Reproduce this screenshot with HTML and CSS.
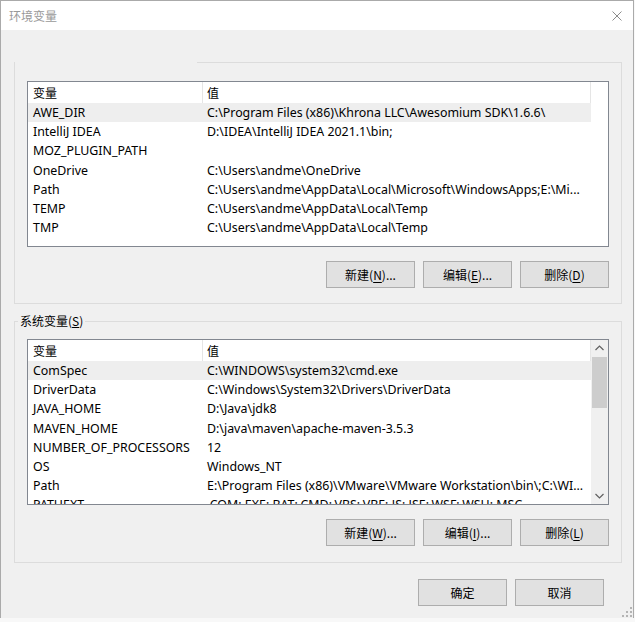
FILE: index.html
```html
<!DOCTYPE html>
<html lang="zh-CN">

<head>
    <meta charset="UTF-8">
    <title>环境变量</title>
    <link rel="stylesheet" href="styles.css">
</head>

<body>
    <div class="window">
        <div class="titlebar">
            <span class="title">环境变量</span>
            <svg class="close" width="10" height="10" viewBox="0 0 10 10">
                <path d="M0.5 0.5 L9.5 9.5 M9.5 0.5 L0.5 9.5" stroke="#8c8c8c" stroke-width="1" fill="none" />
            </svg>
        </div>

        <div class="content">
            <!-- user variables -->
            <div class="group group-user">
                <span class="group-title blank"></span>
                <div class="listbox">
                    <div class="list-body">
                        <div class="list-head">
                            <span class="col-name">变量</span>
                            <span class="col-value">值</span>
                        </div>
                        <div class="list-row selected">
                            <span class="col-name">AWE_DIR</span>
                            <span class="col-value">C:\Program Files (x86)\Khrona LLC\Awesomium SDK\1.6.6\</span>
                        </div>
                        <div class="list-row">
                            <span class="col-name">IntelliJ IDEA</span>
                            <span class="col-value">D:\IDEA\IntelliJ IDEA 2021.1\bin;</span>
                        </div>
                        <div class="list-row">
                            <span class="col-name">MOZ_PLUGIN_PATH</span>
                            <span class="col-value"></span>
                        </div>
                        <div class="list-row">
                            <span class="col-name">OneDrive</span>
                            <span class="col-value">C:\Users\andme\OneDrive</span>
                        </div>
                        <div class="list-row">
                            <span class="col-name">Path</span>
                            <span class="col-value">C:\Users\andme\AppData\Local\Microsoft\WindowsApps;E:\Mi...</span>
                        </div>
                        <div class="list-row">
                            <span class="col-name">TEMP</span>
                            <span class="col-value">C:\Users\andme\AppData\Local\Temp</span>
                        </div>
                        <div class="list-row">
                            <span class="col-name">TMP</span>
                            <span class="col-value">C:\Users\andme\AppData\Local\Temp</span>
                        </div>
                    </div>
                </div>
                <div class="button-row">
                    <button class="btn">新建(<u>N</u>)...</button>
                    <button class="btn">编辑(<u>E</u>)...</button>
                    <button class="btn">删除(<u>D</u>)</button>
                </div>
            </div>

            <!-- system variables -->
            <div class="group group-system">
                <span class="group-title">系统变量(<u>S</u>)</span>
                <div class="listbox">
                    <div class="list-body">
                        <div class="list-head">
                            <span class="col-name">变量</span>
                            <span class="col-value">值</span>
                        </div>
                        <div class="list-row selected">
                            <span class="col-name">ComSpec</span>
                            <span class="col-value">C:\WINDOWS\system32\cmd.exe</span>
                        </div>
                        <div class="list-row">
                            <span class="col-name">DriverData</span>
                            <span class="col-value">C:\Windows\System32\Drivers\DriverData</span>
                        </div>
                        <div class="list-row">
                            <span class="col-name">JAVA_HOME</span>
                            <span class="col-value">D:\Java\jdk8</span>
                        </div>
                        <div class="list-row">
                            <span class="col-name">MAVEN_HOME</span>
                            <span class="col-value">D:\java\maven\apache-maven-3.5.3</span>
                        </div>
                        <div class="list-row">
                            <span class="col-name">NUMBER_OF_PROCESSORS</span>
                            <span class="col-value">12</span>
                        </div>
                        <div class="list-row">
                            <span class="col-name">OS</span>
                            <span class="col-value">Windows_NT</span>
                        </div>
                        <div class="list-row">
                            <span class="col-name">Path</span>
                            <span class="col-value">E:\Program Files (x86)\VMware\VMware Workstation\bin\;C:\WI...</span>
                        </div>
                        <div class="list-row">
                            <span class="col-name">PATHEXT</span>
                            <span class="col-value">.COM;.EXE;.BAT;.CMD;.VBS;.VBE;.JS;.JSE;.WSF;.WSH;.MSC</span>
                        </div>
                    </div>
                    <div class="scrollbar">
                        <svg class="arrow" width="17" height="17" viewBox="0 0 17 17">
                            <path d="M4.5 10 L8.5 6 L12.5 10" stroke="#606060" stroke-width="1.2" fill="none" />
                        </svg>
                        <div class="track">
                            <div class="thumb"></div>
                        </div>
                        <svg class="arrow" width="17" height="17" viewBox="0 0 17 17">
                            <path d="M4.5 7 L8.5 11 L12.5 7" stroke="#606060" stroke-width="1.2" fill="none" />
                        </svg>
                    </div>
                </div>
                <div class="button-row">
                    <button class="btn">新建(<u>W</u>)...</button>
                    <button class="btn">编辑(<u>I</u>)...</button>
                    <button class="btn">删除(<u>L</u>)</button>
                </div>
            </div>

            <div class="dialog-buttons">
                <button class="btn">确定</button>
                <button class="btn">取消</button>
            </div>
        </div>

        <svg class="grip" width="10" height="10" viewBox="0 0 10 10">
            <rect x="8" y="0" width="2" height="2" fill="#b4b4b4" />
            <rect x="4" y="4" width="2" height="2" fill="#b4b4b4" />
            <rect x="8" y="4" width="2" height="2" fill="#b4b4b4" />
            <rect x="0" y="8" width="2" height="2" fill="#b4b4b4" />
            <rect x="4" y="8" width="2" height="2" fill="#b4b4b4" />
            <rect x="8" y="8" width="2" height="2" fill="#b4b4b4" />
        </svg>
    </div>
</body>

</html>
```

FILE: styles.css
```css
* {
    box-sizing: border-box;
}

body {
    margin: 0;
    background: #f8f8f8;
    font-family: "Noto Sans", "Noto Sans CJK SC", sans-serif;
    font-size: 12.4px;
    color: #000;
}

.window {
    position: relative;
    width: 634px;
    height: 618px;
    border: 1px solid #aaaaaa;
    border-bottom: none;
    background: #f0f0f0;
}

.titlebar {
    height: 29px;
    background: #fff;
    display: flex;
    align-items: center;
    justify-content: space-between;
    padding: 0 11px 0 8px;
}

.title {
    color: #999;
    font-family: "Noto Sans CJK SC", sans-serif;
    font-size: 12px;
}

.content {
    padding: 0 11px 0 13px;
}

.group {
    position: relative;
    width: 608px;
    border: 1px solid #dcdcdc;
    padding: 18px 12px 15px;
}

.group-user {
    margin-top: 32px;
}

.group-system {
    margin-top: 17px;
    padding-top: 17px;
    padding-bottom: 16px;
}

.group-title {
    position: absolute;
    top: -9px;
    left: 3px;
    padding: 0 2px;
    line-height: 16px;
    background: #f0f0f0;
    font-family: "Noto Sans CJK SC", sans-serif;
    font-size: 12px;
}

.group-title.blank {
    left: 0;
    width: 182px;
    height: 16px;
    padding: 0;
}

.listbox {
    display: flex;
    height: 166px;
    border: 1px solid #828790;
    background: #fff;
    overflow: hidden;
}

.list-body {
    flex: 1;
    overflow: hidden;
}

.list-head {
    display: flex;
    height: 21px;
    align-items: stretch;
}

.list-head span {
    display: flex;
    align-items: center;
    border-right: 1px solid #e5e5e5;
    font-family: "Noto Sans CJK SC", sans-serif;
    font-size: 12px;
}

.list-row {
    display: flex;
    height: 19.2px;
    align-items: center;
    white-space: nowrap;
}

.col-name {
    width: 175px;
    padding-left: 5px;
    flex-shrink: 0;
    overflow: hidden;
}

.col-value {
    width: 388px;
    padding-left: 4px;
    flex-shrink: 0;
    overflow: hidden;
}

.list-row.selected {
    width: 563px;
    background: #eeeeee;
}

.scrollbar {
    width: 17px;
    display: flex;
    flex-direction: column;
    background: #f0f0f0;
}

.arrow {
    display: block;
    flex-shrink: 0;
}

.track {
    flex: 1;
}

.thumb {
    width: 15px;
    height: 51px;
    margin: 0 1px;
    background: #cdcdcd;
}

.button-row {
    display: flex;
    justify-content: flex-end;
    gap: 8px;
    margin-top: 14px;
}

.btn {
    width: 89px;
    height: 27px;
    background: #e1e1e1;
    border: 1px solid #adadad;
    border-radius: 0;
    padding: 0;
    font-family: "Noto Sans CJK SC", sans-serif;
    font-size: 12px;
    color: #000;
}

.btn u {
    text-underline-offset: 2px;
}

.dialog-buttons {
    display: flex;
    justify-content: flex-end;
    gap: 8px;
    margin-top: 16px;
    padding-right: 18px;
}

.grip {
    position: absolute;
    right: 1px;
    bottom: 1px;
}
```
